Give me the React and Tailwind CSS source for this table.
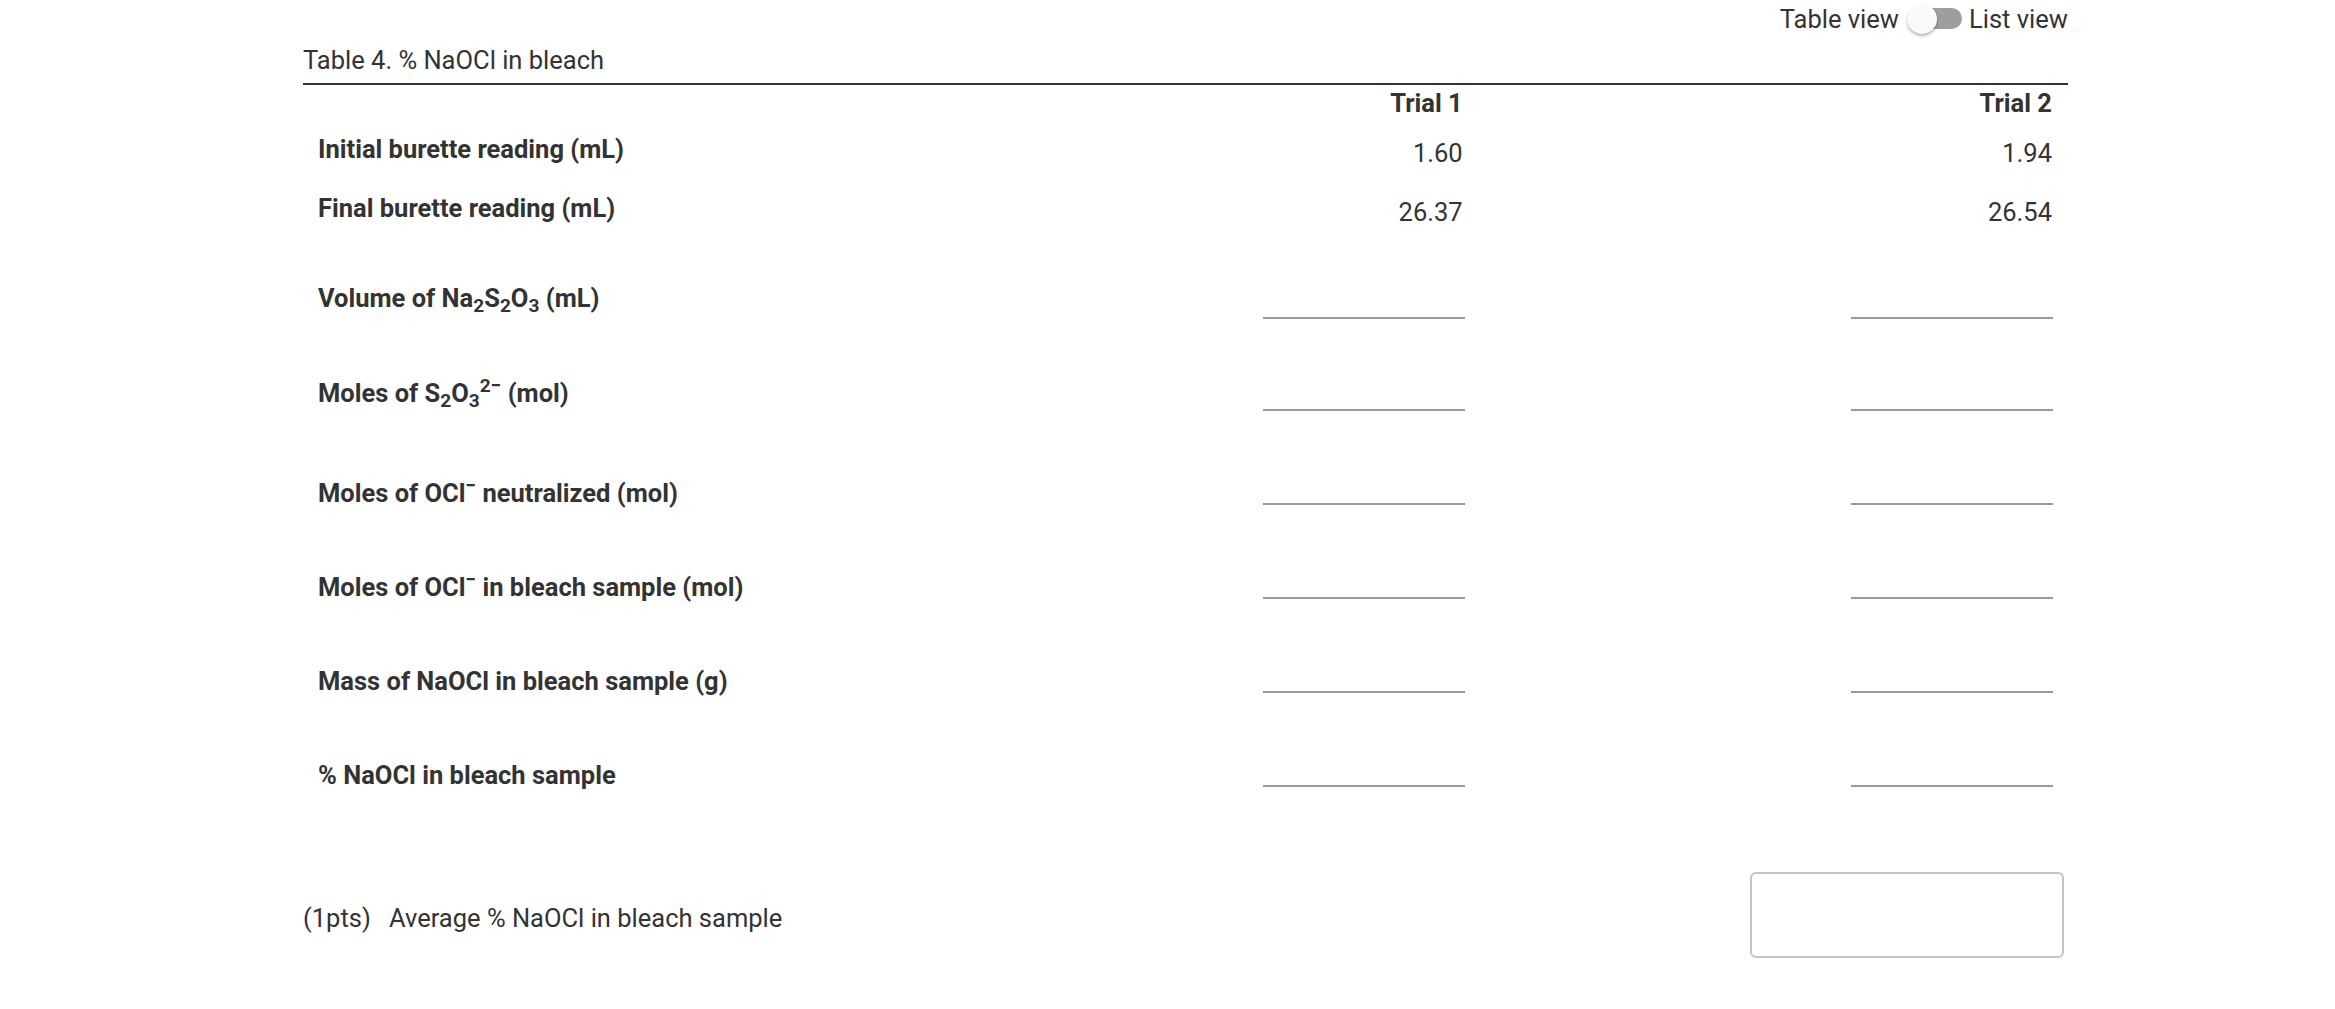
const INPUT_ROWS = [
  { key: 'vol', label: <>Volume of Na<sub>2</sub>S<sub>2</sub>O<sub>3</sub> (mL)</>, h: 'h-[86px]', mb: 'mb-[9px]' },
  { key: 'mol-s', label: <>Moles of S<sub>2</sub>O<sub>3</sub><sup>2−</sup> (mol)</>, h: 'h-[92px]', mb: 'mb-[6px]' },
  { key: 'mol-n', label: <>Moles of OCl<sup>−</sup> neutralized (mol)</>, h: 'h-[94px]', mb: 'mb-0' },
  { key: 'mol-b', label: <>Moles of OCl<sup>−</sup> in bleach sample (mol)</>, h: 'h-[94px]', mb: 'mb-0' },
  { key: 'mass', label: <>Mass of NaOCl in bleach sample (g)</>, h: 'h-[94px]', mb: 'mb-0' },
  { key: 'pct', label: <>% NaOCl in bleach sample</>, h: 'h-[94px]', mb: 'mb-0' },
]

const READINGS = [
  { label: 'Initial burette reading (mL)', t1: '1.60', t2: '1.94' },
  { label: 'Final burette reading (mL)', t1: '26.37', t2: '26.54' },
]

export default function App() {
  return (
    <div className="min-h-screen bg-white font-[Roboto,Arial,sans-serif] text-[#333] text-[25.5px] leading-[30px]">
      <div className="ml-[303px] w-[1765px]">
        {/* View toggle */}
        <div className="flex h-[37px] items-center justify-end">
          <span>Table view</span>
          <Toggle />
          <span>List view</span>
        </div>

        {/* Caption */}
        <div className="border-b-2 border-[#333] pt-[8px] pb-[8px]">Table 4. % NaOCl in bleach</div>

        {/* Header */}
        <div className="grid h-[33px] grid-cols-3 pt-[3px] font-bold">
          <div />
          <div className="pr-[17px] text-right">Trial 1</div>
          <div className="pr-[16px] text-right">Trial 2</div>
        </div>

        {READINGS.map((r) => (
          <div key={r.label} className="grid h-[59px] grid-cols-3">
            <div className="pl-[15px] pt-[16px] font-bold">{r.label}</div>
            <div className="pr-[17px] pt-[20px] text-right">{r.t1}</div>
            <div className="pr-[16px] pt-[20px] text-right">{r.t2}</div>
          </div>
        ))}

        {INPUT_ROWS.map((r) => (
          <div key={r.key} className={`grid grid-cols-3 items-end ${r.h}`}>
            <div className={`pl-[15px] font-bold ${r.mb}`}>{r.label}</div>
            <BlankLine />
            <BlankLine />
          </div>
        ))}

        {/* Average */}
        <div className="mt-[82px] flex items-center justify-between">
          <div className="flex pt-[6px]">
            <span className="w-[86px]">(1pts)</span>
            <span>Average % NaOCl in bleach sample</span>
          </div>
          <input className="mr-[4px] h-[86px] w-[314px] rounded-[6px] border-2 border-[#c4c4c4] bg-white outline-none" />
        </div>
      </div>
    </div>
  )
}

function BlankLine() {
  return <div className="mb-[3px] mr-[15px] h-[40px] w-[202px] justify-self-end border-b-2 border-[#999]" />
}

function Toggle() {
  return (
    <div className="relative ml-[8px] mr-[7px] h-[30px] w-[55px]">
      <div className="absolute left-[4px] right-0 top-[4px] h-[21px] rounded-full bg-[#9e9e9e]" />
      <div className="absolute left-0 top-0 h-[30px] w-[30px] rounded-full bg-[#fafafa] shadow-[0_2px_3px_rgba(0,0,0,0.3)]" />
    </div>
  )
}
